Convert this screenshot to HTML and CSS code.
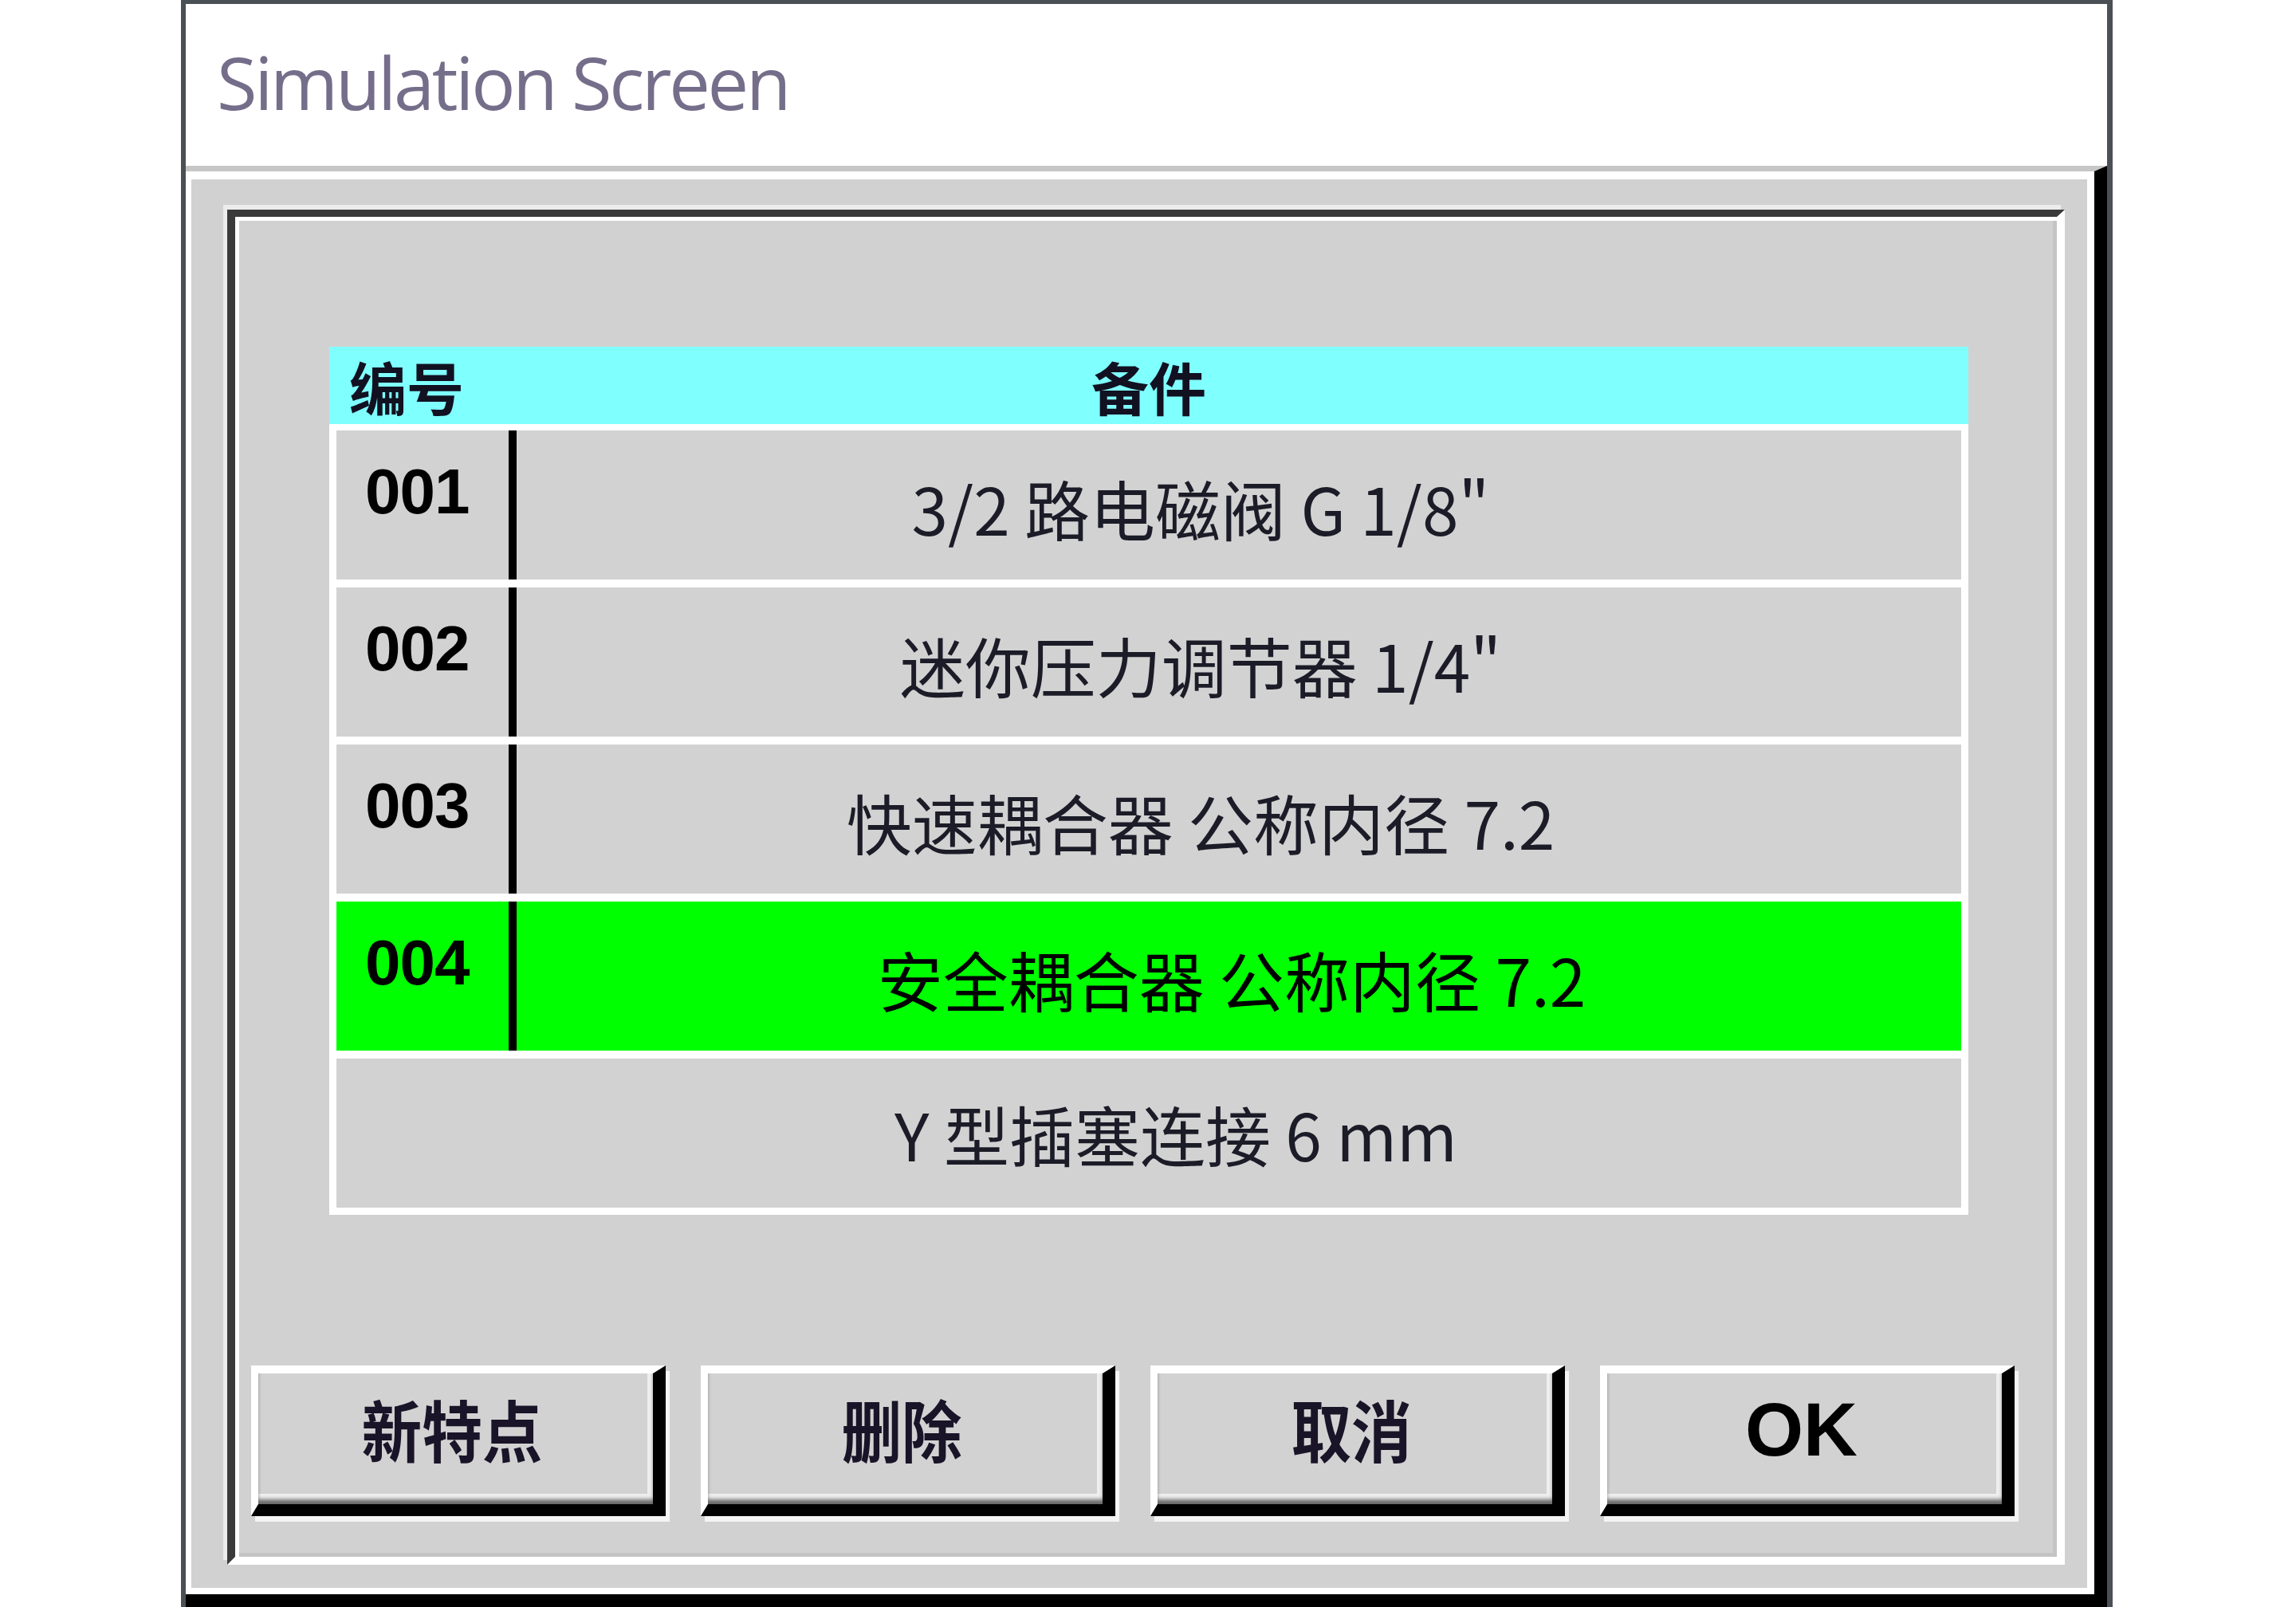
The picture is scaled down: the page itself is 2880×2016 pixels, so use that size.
FILE: index.html
```html
<!DOCTYPE html>
<html lang="zh-CN">
<head>
<meta charset="utf-8">
<title>Simulation Screen</title>
<link rel="stylesheet" href="styles.css">
</head>
<body>
<div class="window">
  <div class="titlebar"><span class="title">Simulation Screen</span></div>
  <div class="client">
    <div class="panel">
      <div class="table">
        <div class="thead">
          <span class="th-no">编号</span>
          <span class="th-part">备件</span>
          <span></span>
        </div>
        <div class="tbody">
          <div class="row"><div class="no">001</div><div class="part">3/2 路电磁阀 G 1/8"</div></div>
          <div class="row"><div class="no">002</div><div class="part">迷你压力调节器 1/4"</div></div>
          <div class="row"><div class="no">003</div><div class="part">快速耦合器 公称内径 7.2</div></div>
          <div class="row selected"><div class="no">004</div><div class="part">安全耦合器 公称内径 7.2</div></div>
          <div class="row row-wide"><div class="part">Y 型插塞连接 6 mm</div></div>
        </div>
      </div>
      <div class="buttons">
        <div class="btn"><span class="btn-label">新特点</span></div>
        <div class="btn"><span class="btn-label">删除</span></div>
        <div class="btn"><span class="btn-label">取消</span></div>
        <div class="btn btn-ok"><span class="btn-label">OK</span></div>
      </div>
    </div>
  </div>
</div>
</body>
</html>
```

FILE: styles.css
```css
* { box-sizing: border-box; }

html, body {
  margin: 0;
  padding: 0;
  height: 2016px;
  overflow: hidden;
  background: #ffffff;
}

.window {
  margin-left: 227px;
  width: 2423px;
  height: 2016px;
  border-style: solid;
  border-color: #4a5056;
  border-width: 5px 7px 0 6px;
  display: flex;
  flex-direction: column;
  background: #ffffff;
}

.titlebar {
  height: 203px;
  flex: none;
  background: #ffffff;
  display: flex;
  align-items: center;
  padding-left: 39px;
  padding-bottom: 8px;
}

.title {
  font-family: "Open Sans", "Noto Sans", sans-serif;
  font-size: 92px;
  line-height: 1;
  letter-spacing: -3.3px;
  color: #756e8a;
}

.client {
  flex: 1;
  display: flex;
  background: #d1d1d1;
  border-top: 7px solid #c6c6c6;
  border-right: 16px solid #000000;
  border-bottom: 16px solid #000000;
  box-shadow: inset 7px 10px 0 #ffffff, inset -9px -8px 0 #ffffff;
  padding: 48px 37px 37px 52px;
}

.panel {
  flex: 1;
  min-width: 0;
  display: flex;
  flex-direction: column;
  border-style: solid;
  border-width: 9px 10px 10px 10px;
  border-color: #3a3a3a #ffffff #ffffff #3a3a3a;
  box-shadow: -5px -6px 0 #ececec, inset 5px 5px 0 #ffffff, inset -5px -5px 0 #c4c4c4;
  padding-top: 163px;
}

.table {
  display: flex;
  flex-direction: column;
  margin: 0 111px 0 118px;
}

.thead {
  height: 97px;
  background: #80ffff;
  display: grid;
  grid-template-columns: 1fr auto 1fr;
  align-items: end;
  padding: 0 25px 12px 25px;
  font-family: "Noto Sans CJK SC", sans-serif;
  font-weight: 700;
  font-size: 72px;
  line-height: 1;
  color: #111122;
}

.th-part { text-align: center; }

.tbody {
  background: #ffffff;
  padding: 8px 9px 9px 9px;
  display: flex;
  flex-direction: column;
  gap: 10px;
}

.row {
  height: 187px;
  display: flex;
  background: #d2d2d2;
}

.row.selected { background: #00ff00; }

.no {
  width: 226px;
  flex: none;
  border-right: 10px solid #000000;
  padding: 37px 0 0 36px;
  font-family: "Liberation Sans", Arial, sans-serif;
  font-weight: 700;
  font-size: 80px;
  line-height: 1;
  letter-spacing: -1px;
  color: #000000;
}

.part {
  flex: 1;
  display: flex;
  align-items: center;
  justify-content: center;
  padding: 6px 96px 0 0;
  font-family: "Noto Sans CJK SC", sans-serif;
  font-size: 82px;
  line-height: 1;
  color: #1c1c28;
  white-space: pre;
}

.row.selected .part { padding-right: 18px; color: #000000; }

.row-wide .part { padding: 0 0 0 68px; }

.buttons {
  margin-top: auto;
  margin-bottom: 51px;
  padding-left: 20px;
  display: flex;
  gap: 44px;
}

.btn {
  width: 520px;
  height: 189px;
  flex: none;
  display: flex;
  align-items: center;
  justify-content: center;
  background: #d2d2d2;
  border-style: solid;
  border-width: 10px 16px 15px 9px;
  border-color: #ffffff #000000 #000000 #ffffff;
  box-shadow: 5px 7px 0 #f4f4f4, inset 0 -7px 5px -1px #6a6a6a, inset -7px -13px 0 #efefef;
  padding: 0 8px 26px 0;
  font-family: "Noto Sans CJK SC", sans-serif;
  font-weight: 700;
  font-size: 84px;
  line-height: 1;
  color: #191428;
}

.btn-label {
  display: inline-block;
  transform: scaleX(0.9);
}

.btn-ok {
  font-family: "Liberation Sans", Arial, sans-serif;
  font-size: 94px;
  color: #000000;
  padding-bottom: 22px;
}

.btn-ok .btn-label { transform: none; }
```
